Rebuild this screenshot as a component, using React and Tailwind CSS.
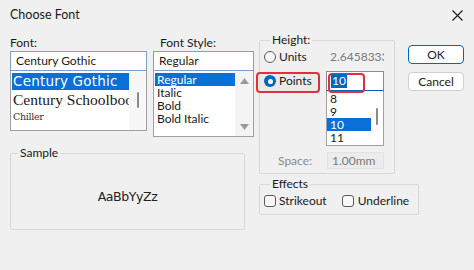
import React from "react";

function Radio({ checked }) {
  return checked ? (
    <span className="w-[12px] h-[12px] rounded-full bg-[#0067c0] flex items-center justify-center shrink-0">
      <span className="w-[5px] h-[5px] rounded-full bg-white" />
    </span>
  ) : (
    <span className="w-[12px] h-[12px] rounded-full border border-[#5a5a5a] bg-[#f7f7f7] shrink-0" />
  );
}

function Check() {
  return <span className="w-[12px] h-[12px] rounded-[3px] border border-[#5a5a5a] bg-[#f7f7f7] shrink-0" />;
}

function Arrow({ up }) {
  return (
    <svg width="9" height="6" viewBox="0 0 9 6">
      <polygon points={up ? "0,6 9,6 4.5,0" : "0,0 9,0 4.5,6"} fill="#9a9a9a" />
    </svg>
  );
}

export default function App() {
  return (
    <div className="w-[474px] h-[270px] bg-[#f0f0f0] overflow-hidden text-[12px] text-[#1a1a1a] font-['Lato',sans-serif] leading-none">
      {/* title bar */}
      <div className="h-[30px] flex items-center justify-between pl-[10px] pr-[11px]">
        <span className="text-[12.5px]">Choose Font</span>
        <svg width="11" height="11" viewBox="0 0 11 11">
          <path d="M0.5 0.5 L10.5 10.5 M10.5 0.5 L0.5 10.5" stroke="#1a1a1a" strokeWidth="1.1" />
        </svg>
      </div>

      <div className="flex pl-[10px]">
        {/* left area */}
        <div className="w-[244px] flex flex-col">
          <div className="flex pt-[4px]">
            {/* Font column */}
            <div className="w-[137px] flex flex-col">
              <div className="h-[17px] flex items-center">Font:</div>
              <div className="h-[20px] border border-[#7a9fd0] bg-white flex items-center pl-[5px]">Century Gothic</div>
              <div className="h-[60px] border border-[#a0a0a0] border-t-0 bg-white flex overflow-hidden">
                <div className="flex-1 flex flex-col pt-[2px] pl-[1px] overflow-hidden">
                  <div className="h-[17px] w-[118px] bg-[#0a6fd6] text-white flex items-center pl-[1px] text-[13.5px] font-['DejaVu_Sans',sans-serif] whitespace-nowrap tracking-[0.2px]">Century Gothic</div>
                  <div className="h-[20px] flex items-center pl-[1px] text-[15.5px] font-['Liberation_Serif',serif] whitespace-nowrap overflow-hidden w-[117px]">Century Schoolbook</div>
                  <div className="h-[14px] flex items-center pl-[1px] text-[9.5px] font-['DejaVu_Serif',serif] text-[#333] tracking-[-0.3px]">Chiller</div>
                </div>
                <div className="w-[17px] bg-[#f7f7f7] flex justify-center">
                  <div className="w-[2px] h-[16px] mt-[21px] bg-[#8a8a8a] rounded-full" />
                </div>
              </div>
            </div>
            {/* Style column */}
            <div className="w-[101px] ml-[6px] flex flex-col">
              <div className="h-[17px] flex items-center pl-[7px]">Font Style:</div>
              <div className="h-[20px] border border-[#7a9fd0] bg-white flex items-center pl-[5px]">Regular</div>
              <div className="h-[66px] border border-[#a0a0a0] border-t-0 bg-white flex">
                <div className="flex-1 flex flex-col pt-[2px] pl-[1px]">
                  <div className="h-[13px] bg-[#0a6fd6] text-white flex items-center pl-[2px]">Regular</div>
                  <div className="h-[13px] flex items-center pl-[2px]">Italic</div>
                  <div className="h-[13px] flex items-center pl-[2px]">Bold</div>
                  <div className="h-[13px] flex items-center pl-[2px]">Bold Italic</div>
                </div>
                <div className="w-[18px] bg-[#f4f4f4] flex flex-col items-center justify-between pt-[7px] pb-[6px]">
                  <Arrow up />
                  <Arrow />
                </div>
              </div>
            </div>
          </div>
          {/* Sample */}
          <fieldset className="mt-[9px] h-[84px] w-[235px] border border-[#d8d8d8] rounded-[2px] flex">
            <legend className="ml-[7px] px-[2px] leading-[14px]">Sample</legend>
            <div className="flex-1 flex items-center justify-center pt-[6px] h-[68px] text-[12.5px] font-['DejaVu_Sans',sans-serif] tracking-[-0.4px] text-[#222]">
              AaBbYyZz
            </div>
          </fieldset>
        </div>

        {/* right area */}
        <div className="ml-[5px] flex flex-col">
          <div className="flex">
            <fieldset className="mt-[3px] w-[136px] h-[141px] border border-[#d8d8d8] rounded-[2px] pl-[4px]">
              <legend className="ml-[6px] px-[2px] leading-[14px]">Height:</legend>
              <div className="flex h-[20px] items-center">
                <div className="w-[62px] flex items-center">
                  <Radio />
                  <span className="ml-[3px]">Units</span>
                </div>
                <div className="w-[58px] pl-[4px] text-[#7a7a7a] whitespace-nowrap overflow-hidden">2.6458333:</div>
              </div>
              <div className="flex mt-[4px]">
                <div className="w-[62px] h-[20px] flex items-center relative">
                  <span className="absolute left-[-8px] top-[1px] w-[64px] h-[21px] rounded-[4px] border-2 border-[#e0303a] bg-[#e6e6e6]/60" />
                  <span className="relative flex items-center">
                    <Radio checked />
                    <span className="ml-[3px]">Points</span>
                  </span>
                </div>
                <div className="w-[58px] flex flex-col">
                  <div className="h-[20px] border border-[#8c8c8c] border-b-[#0067c0] bg-white flex items-center pl-[4px] relative">
                    <span className="bg-[#0067c0] text-white px-[1px] leading-[14px] relative z-10">10</span>
                    <span className="absolute left-[1px] top-[1px] w-[37px] h-[20px] rounded-[4px] border-2 border-[#e0303a]" />
                  </div>
                  <div className="h-[55px] border border-[#a0a0a0] border-t-0 bg-white flex">
                    <div className="flex-1 flex flex-col pt-[1px]">
                      <div className="h-[13px] flex items-center pl-[3px]">8</div>
                      <div className="h-[13px] flex items-center pl-[3px]">9</div>
                      <div className="h-[13px] flex items-center pl-[3px] bg-[#0a6fd6] text-white">10</div>
                      <div className="h-[13px] flex items-center pl-[3px]">11</div>
                    </div>
                    <div className="w-[12px] flex justify-center">
                      <div className="w-[2px] h-[17px] mt-[17px] bg-[#8a8a8a] rounded-full" />
                    </div>
                  </div>
                </div>
              </div>
              <div className="flex mt-[6px] items-center">
                <div className="w-[63px] pl-[14px] text-[#8a8a8a]">Space:</div>
                <div className="w-[57px] h-[17px] border border-[#e2e2e2] bg-[#ececec] flex items-center pl-[4px] text-[#7a7a7a]">1.00mm</div>
              </div>
            </fieldset>
            <div className="ml-[13px] mt-[15px] w-[56px] flex flex-col">
              <div className="h-[19px] rounded-[4px] border border-[#0067c0] bg-white flex items-center justify-center">OK</div>
              <div className="h-[19px] mt-[8px] rounded-[4px] border border-[#d0d0d0] bg-white flex items-center justify-center">Cancel</div>
            </div>
          </div>
          <fieldset className="mt-[3px] w-[160px] h-[38px] border border-[#d8d8d8] rounded-[2px] pl-[4px]">
            <legend className="ml-[6px] px-[2px] leading-[14px]">Effects</legend>
            <div className="flex items-center h-[18px] mt-[1px]">
              <Check />
              <span className="ml-[3px]">Strikeout</span>
              <span className="ml-[15px] flex items-center">
                <Check />
                <span className="ml-[4px]">Underline</span>
              </span>
            </div>
          </fieldset>
        </div>
      </div>
    </div>
  );
}
